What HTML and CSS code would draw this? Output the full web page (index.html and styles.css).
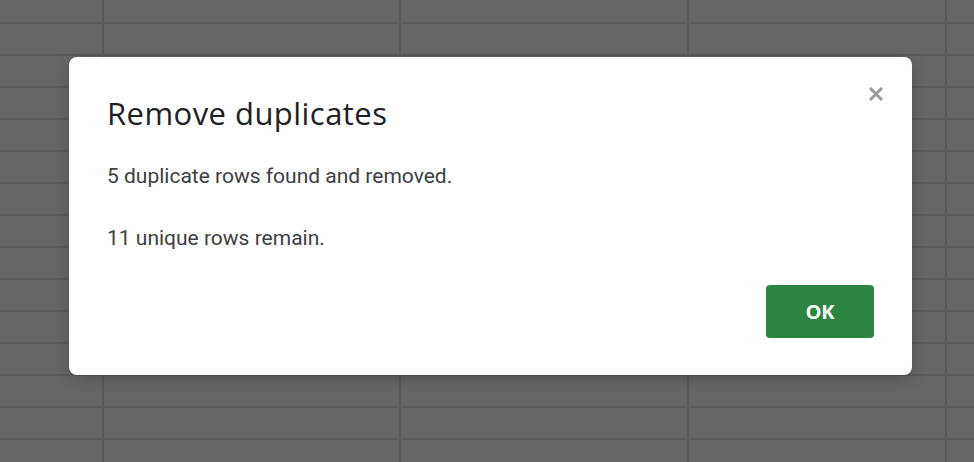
FILE: index.html
```html
<!DOCTYPE html>
<html lang="en">
<head>
<meta charset="utf-8">
<title>Remove duplicates</title>
<link rel="stylesheet" href="styles.css">
</head>
<body>
<div class="sheet">
  <div class="col col-a"></div>
  <div class="col col-b"></div>
  <div class="col col-c"></div>
  <div class="col col-d"></div>
  <div class="col col-e"></div>
</div>
<div class="dialog" role="dialog" aria-labelledby="dlg-title">
  <button class="close" aria-label="Close">
    <svg width="18" height="18" viewBox="0 0 18 18"><path d="M3 3 L15 15 M15 3 L3 15" stroke="#9a9a9a" stroke-width="3" stroke-linecap="butt" fill="none"/></svg>
  </button>
  <h1 class="title" id="dlg-title">Remove duplicates</h1>
  <p class="msg first">5 duplicate rows found and removed.</p>
  <p class="msg">11 unique rows remain.</p>
  <div class="actions">
    <button class="ok">OK</button>
  </div>
</div>
</body>
</html>
```
FILE: styles.css
```css
html, body {
  margin: 0;
  padding: 0;
  width: 974px;
  height: 462px;
  overflow: hidden;
  background: #666666;
  font-family: Roboto, "Liberation Sans", Arial, sans-serif;
}

.sheet {
  display: flex;
  height: 462px;
  background-image: repeating-linear-gradient(to bottom, transparent 0 30px, #5a5a5a 30px 32px);
  background-position: 0 -8px;
}

.col {
  height: 100%;
  border-right: 2px solid #5a5a5a;
  box-sizing: border-box;
}
.col-a { width: 104px; }
.col-b { width: 297px; }
.col-c { width: 288px; }
.col-d { width: 258px; }
.col-e { flex: 1; border-right: none; }

.dialog {
  position: absolute;
  left: 69px;
  top: 57px;
  width: 843px;
  height: 318px;
  box-sizing: border-box;
  background: #ffffff;
  border-radius: 8px;
  box-shadow: 0 4px 16px rgba(0, 0, 0, 0.2);
  padding: 38px 38px 37px 38px;
  display: flex;
  flex-direction: column;
}

.close {
  position: absolute;
  top: 28px;
  right: 27px;
  width: 18px;
  height: 18px;
  padding: 0;
  border: none;
  background: none;
  display: flex;
}

.title {
  margin: 0;
  font-family: "Open Sans", Roboto, sans-serif;
  font-weight: 400;
  font-size: 31px;
  letter-spacing: 0.45px;
  line-height: 36px;
  color: #202124;
}

.msg {
  margin: 38px 0 0 0;
  font-size: 21px;
  line-height: 24px;
  color: #3c4043;
}
.msg.first {
  margin-top: 33px;
}

.actions {
  margin-top: auto;
  display: flex;
  justify-content: flex-end;
}

.ok {
  width: 108px;
  height: 53px;
  border: none;
  border-radius: 4px;
  background: #2c8540;
  color: #ffffff;
  font-family: "Open Sans", Roboto, sans-serif;
  font-weight: 700;
  font-size: 20px;
  padding: 0;
}
```
